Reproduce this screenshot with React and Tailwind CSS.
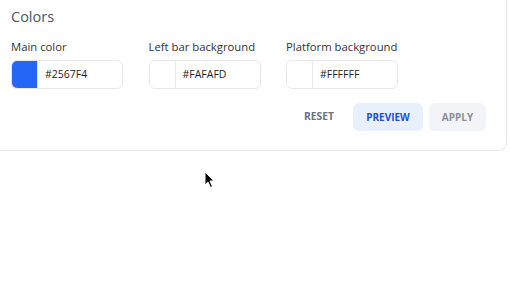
const fields = [
  { label: 'Main color', value: '#2567F4', swatch: 'bg-[#2567F4]' },
  { label: 'Left bar background', value: '#FAFAFD', swatch: 'bg-white' },
  { label: 'Platform background', value: '#FFFFFF', swatch: 'bg-white' },
];

export default function App() {
  return (
    <div className="w-[510px] h-[298px] bg-white font-['Open_Sans',sans-serif]">
      <div className="w-[507px] border-r border-b border-[#e5e7eb] rounded-br-lg pl-[11px] pr-5 pb-[19px]">
        <h2 className="text-[14.5px] leading-[20px] pt-[7px] text-[#4b5563]">Colors</h2>
        <div className="flex gap-[25.5px] mt-[12px]">
          {fields.map((f) => (
            <div key={f.label} className="flex flex-col">
              <label className="text-[11.3px] leading-[16px] text-[#333]">{f.label}</label>
              <div className="mt-[5px] flex w-[112px] h-[29px] border border-[#e5e7eb] rounded-md overflow-hidden">
                <div className={`w-[26px] h-full border-r border-[#e5e7eb] ${f.swatch}`} />
                <div className="flex items-center pl-[7px] text-[10.5px] text-[#222]">{f.value}</div>
              </div>
            </div>
          ))}
        </div>
        <div className="flex justify-end items-center gap-[6px] mt-[14px]">
          <button className="h-[28px] px-[13px] text-[10.3px] font-bold text-[#6b7280]">RESET</button>
          <button className="h-[28px] w-[70px] rounded-md bg-[#e8f0fd] text-[10px] font-bold text-[#1d4ed8]">PREVIEW</button>
          <button className="h-[28px] w-[57px] rounded-md bg-[#f3f4f8] text-[10px] font-bold text-[#8b8f99]">APPLY</button>
        </div>
      </div>
      <div className="relative">
        <svg className="absolute left-[204px] top-[20px]" width="12" height="18" viewBox="0 0 12 18">
          <path d="M1 1 L1 14 L4 11 L6.5 16.5 L8.5 15.5 L6 10 L10 10 Z" fill="#000" stroke="#fff" strokeWidth="1" />
        </svg>
      </div>
    </div>
  );
}
